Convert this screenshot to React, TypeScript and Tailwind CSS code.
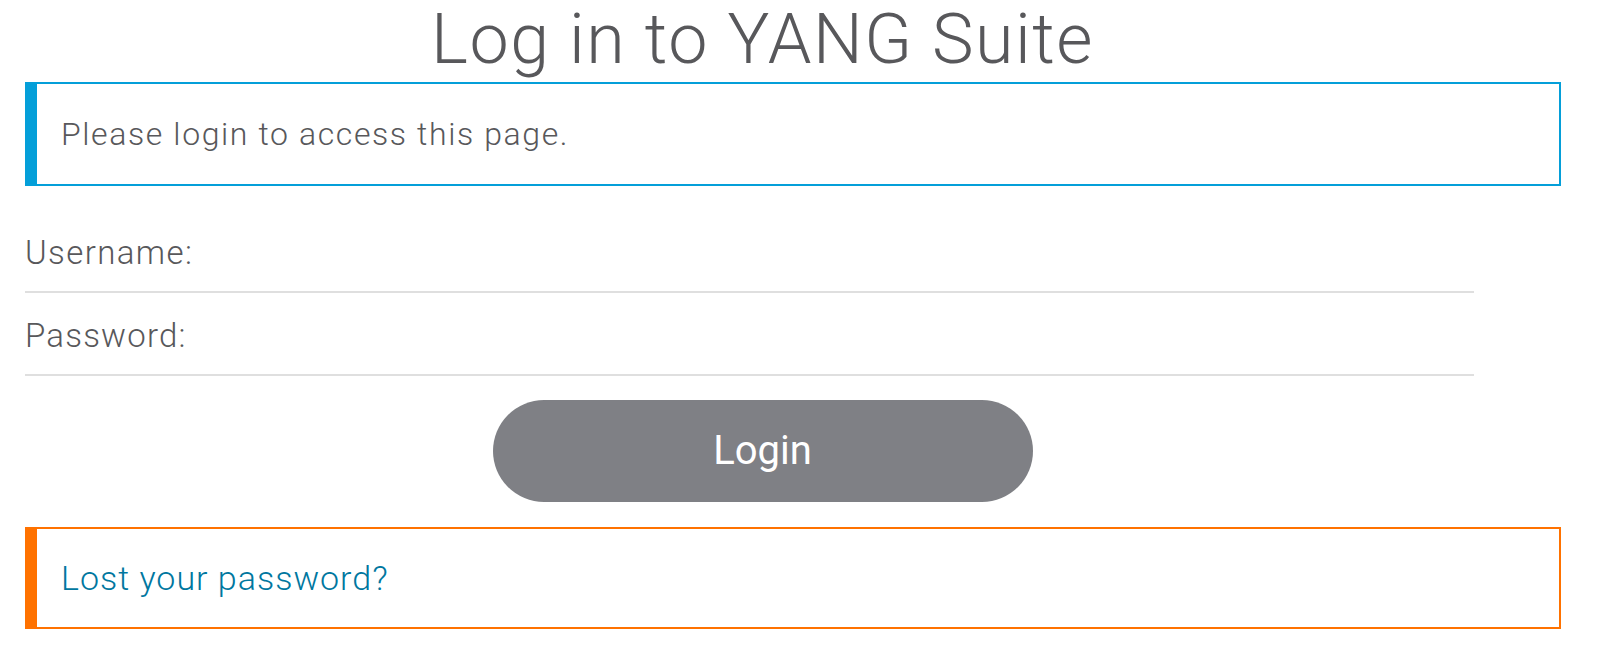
import React from "react";

export default function App() {
  const font = { fontFamily: "Roboto, 'Liberation Sans', Arial, sans-serif" };
  return (
    <div className="min-h-[661px] w-[1600px] bg-white text-[#58585b]" style={font}>
      <div className="ml-[25px] w-[1475px]">
        <h1 className="h-[82px] text-center text-[70px] font-light leading-[78px] tracking-[1.5px] text-[#58585b]">
          Log in to YANG Suite
        </h1>
      </div>
      <div className="ml-[25px] flex h-[104px] w-[1536px] items-center border-2 border-l-[12px] border-[#049fd9] pl-[24px]">
        <p className="text-[32px] font-light leading-[40px] tracking-[1.6px]">Please login to access this page.</p>
      </div>
      <div className="ml-[25px] mt-[24px] w-[1475px]">
        <div className="h-[83px] w-[1449px] border-b-2 border-[#dfdfdf] pt-[23px]">
          <label className="block text-[33px] font-light leading-[40px] tracking-[1.4px]">Username:</label>
        </div>
        <div className="h-[83px] w-[1449px] border-b-2 border-[#dfdfdf] pt-[23px]">
          <label className="block text-[33px] font-light leading-[40px] tracking-[1.2px]">Password:</label>
        </div>
        <div className="mt-[24px] flex justify-center">
          <button className="flex h-[102px] w-[540px] items-center justify-center rounded-full bg-[#7f8085] text-[40px] text-white">
            Login
          </button>
        </div>
      </div>
      <div className="ml-[25px] mt-[25px] flex h-[102px] w-[1536px] items-center border-2 border-l-[12px] border-[#ff7200] pl-[24px]">
        <a className="text-[34px] font-light leading-[40px] tracking-[1px] text-[#00779f]" href="#">
          Lost your password?
        </a>
      </div>
    </div>
  );
}
